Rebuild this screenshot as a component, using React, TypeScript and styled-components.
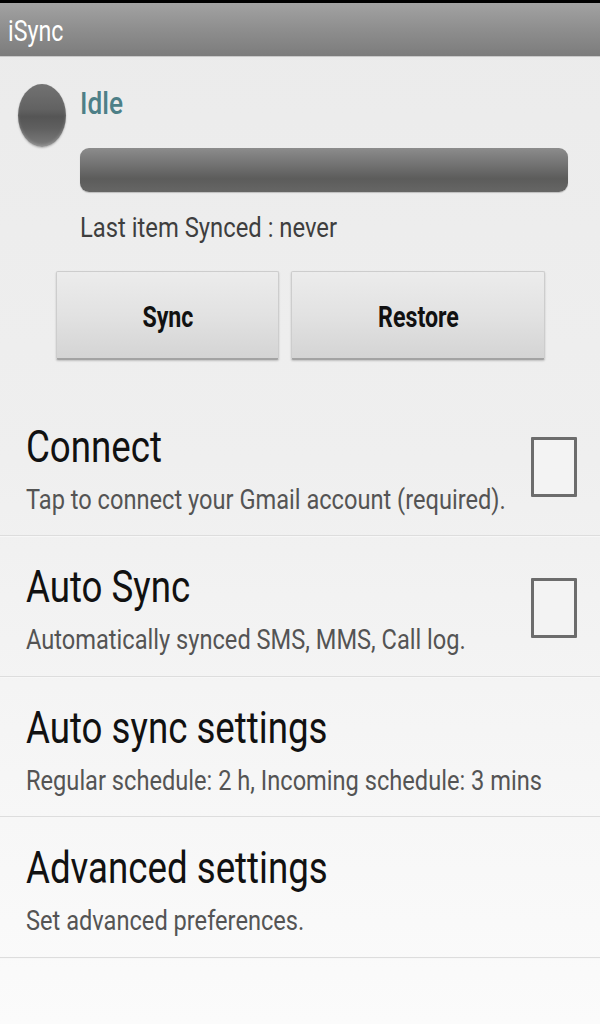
import React from "react";
import styled, { createGlobalStyle } from "styled-components";

const GlobalStyle = createGlobalStyle`
  html, body {
    margin: 0;
    padding: 0;
  }
  body {
    width: 600px;
    min-height: 1024px;
    font-family: Roboto, "Noto Sans", "Liberation Sans", sans-serif;
    background: linear-gradient(to bottom, #ebebeb 0%, #efefef 45%, #f7f7f7 80%, #fbfbfb 100%);
    overflow: hidden;
  }
`;

// the screenshot's text is narrower than stock Roboto, so squeeze it
const Squeeze = styled.span<{ $origin?: string; $scale?: number }>`
  display: inline-block;
  white-space: nowrap;
  transform: scaleX(${(p) => p.$scale ?? 0.8});
  transform-origin: ${(p) => p.$origin || "left"} center;
`;

const Screen = styled.div`
  width: 600px;
  min-height: 1024px;
  display: flex;
  flex-direction: column;
`;

const StatusStrip = styled.div`
  height: 3px;
  background: #000;
`;

const TitleBar = styled.div`
  height: 53px;
  display: flex;
  align-items: center;
  padding-left: 8px;
  background: linear-gradient(to bottom, #a2a2a2 0%, #8e8e8e 50%, #7c7c7c 100%);
  border-bottom: 1px solid #c9c9c9;
`;

const AppTitle = styled.h1`
  margin: 0;
  padding-top: 2px;
  font-size: 29px;
  font-weight: 400;
  line-height: 34px;
  color: #fff;
`;

const StatusPanel = styled.section`
  display: flex;
  padding: 26px 32px 0 18px;
  gap: 14px;
`;

const StatusLight = styled.div`
  width: 48px;
  height: 63px;
  margin-top: 1px;
  flex-shrink: 0;
  border-radius: 50%;
  background: linear-gradient(
    to bottom,
    #727272 0%,
    #626262 40%,
    #555555 52%,
    #5f5f5f 70%,
    #7d7d7d 100%
  );
  box-shadow: 0 1px 2px rgba(0, 0, 0, 0.25), inset 0 -2px 3px rgba(255, 255, 255, 0.2);
`;

const StatusBody = styled.div`
  flex: 1;
  min-width: 0;
  display: flex;
  flex-direction: column;
`;

const StateLabel = styled.div`
  font-size: 32px;
  line-height: 40px;
  font-weight: 500;
  color: #4d7f87;
`;

const ProgressTrack = styled.div`
  height: 44px;
  margin-top: 25px;
  border-radius: 9px;
  background: linear-gradient(
    to bottom,
    #8c8c8c 0%,
    #747474 35%,
    #5c5c5b 70%,
    #666665 100%
  );
  box-shadow: 0 1px 1px rgba(0, 0, 0, 0.2);
`;

const LastSynced = styled.div`
  margin-top: 19px;
  font-size: 28px;
  line-height: 34px;
  color: #3e3e3e;
`;

const ButtonRow = styled.div`
  display: flex;
  gap: 12px;
  padding-left: 56px;
  margin-top: 26px;
`;

const ActionButton = styled.button<{ $width: number }>`
  width: ${(p) => p.$width}px;
  height: 89px;
  padding: 3px 0 0;
  display: flex;
  align-items: center;
  justify-content: center;
  font-family: Roboto, "Noto Sans", "Liberation Sans", sans-serif;
  font-size: 29px;
  font-weight: 700;
  color: #111;
  border: 1px solid #cdcdcd;
  border-bottom: 2px solid #a3a3a3;
  border-radius: 2px;
  background: linear-gradient(to bottom, #ececec 0%, #e2e2e2 50%, #d4d4d4 100%);
  box-shadow: 0 1px 2px rgba(0, 0, 0, 0.2);
`;

const PrefList = styled.div`
  margin-top: 36px;
  display: flex;
  flex-direction: column;
`;

const PrefRow = styled.div`
  height: 139.4px;
  box-sizing: content-box;
  display: flex;
  align-items: center;
  padding: 0 23px 0 26px;
  border-bottom: 1px solid #dddddd;
  box-shadow: 0 1px 0 #f7f7f7;
`;

const PrefText = styled.div`
  flex: 1;
  min-width: 0;
  align-self: flex-start;
  padding-top: 24px;
`;

const PrefTitle = styled.div`
  font-size: 45px;
  line-height: 54px;
  color: #111;
`;

const PrefSummary = styled.div`
  margin-top: 10px;
  font-size: 27px;
  line-height: 32px;
  color: #545454;
`;

const CheckBox = styled.div`
  width: 40px;
  height: 54px;
  margin-top: 3px;
  flex-shrink: 0;
  border: 3px solid #6c6c6c;
  border-radius: 1px;
  background: #f3f3f3;
`;

type Pref = {
  title: string;
  summary: string;
  checkbox?: boolean;
};

const prefs: Pref[] = [
  {
    title: "Connect",
    summary: "Tap to connect your Gmail account (required).",
    checkbox: true,
  },
  {
    title: "Auto Sync",
    summary: "Automatically synced SMS, MMS, Call log.",
    checkbox: true,
  },
  {
    title: "Auto sync settings",
    summary: "Regular schedule: 2 h, Incoming schedule: 3 mins",
  },
  {
    title: "Advanced settings",
    summary: "Set advanced preferences.",
  },
];

const App: React.FC = () => {
  return (
    <>
      <GlobalStyle />
      <Screen>
        <StatusStrip />
        <TitleBar>
          <AppTitle>
            <Squeeze>iSync</Squeeze>
          </AppTitle>
        </TitleBar>

        <StatusPanel>
          <StatusLight />
          <StatusBody>
            <StateLabel>
              <Squeeze $scale={0.82}>Idle</Squeeze>
            </StateLabel>
            <ProgressTrack />
            <LastSynced>
              <Squeeze $scale={0.85}>Last item Synced : never</Squeeze>
            </LastSynced>
          </StatusBody>
        </StatusPanel>

        <ButtonRow>
          <ActionButton $width={223}>
            <Squeeze $origin="center">Sync</Squeeze>
          </ActionButton>
          <ActionButton $width={254}>
            <Squeeze $origin="center">Restore</Squeeze>
          </ActionButton>
        </ButtonRow>

        <PrefList>
          {prefs.map((p) => (
            <PrefRow key={p.title}>
              <PrefText>
                <PrefTitle>
                  <Squeeze $scale={0.815}>{p.title}</Squeeze>
                </PrefTitle>
                <PrefSummary>
                  <Squeeze $scale={0.875}>{p.summary}</Squeeze>
                </PrefSummary>
              </PrefText>
              {p.checkbox && <CheckBox />}
            </PrefRow>
          ))}
        </PrefList>
      </Screen>
    </>
  );
};

export default App;
